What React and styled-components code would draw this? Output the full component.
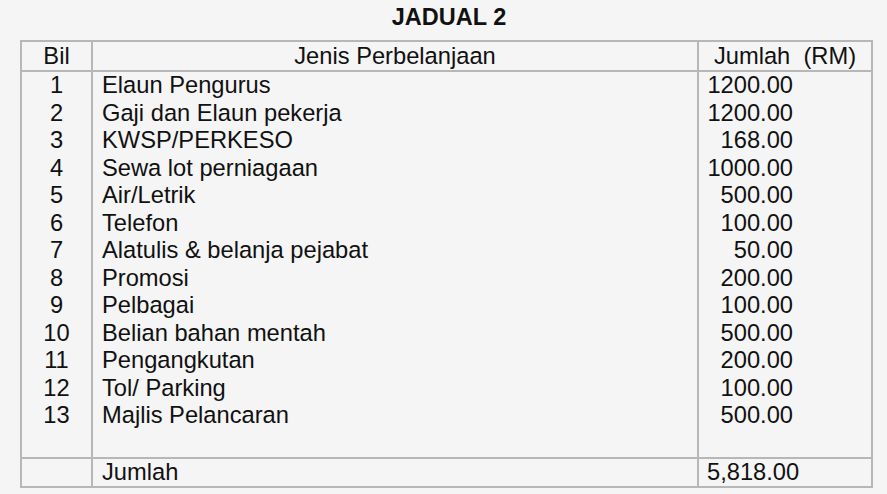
import React from "react";
import styled, { createGlobalStyle } from "styled-components";

const GlobalStyle = createGlobalStyle`
  html, body {
    margin: 0;
    background: #f5f5f5;
  }
  body {
    font-family: "Liberation Sans", Arial, sans-serif;
    color: #111;
  }
`;

const Page = styled.div`
  width: 887px;
  height: 494px;
  padding-top: 3px;
  box-sizing: border-box;
`;

const Title = styled.h1`
  margin: 0 0 9px 0;
  font-size: 23.5px;
  font-weight: bold;
  line-height: 28px;
  text-align: center;
  padding-left: 11px;
`;

const Table = styled.div`
  margin-left: 20px;
  width: 853px;
  display: grid;
  grid-template-columns: 69px 606px 174px;
  border: 2px solid #b7b7b7;
  box-sizing: border-box;
  font-size: 23.7px;
`;

const Cell = styled.div`
  box-sizing: border-box;
  white-space: pre;
  border-left: ${(p) => (p.$first ? "none" : "2px solid #b7b7b7")};
  text-align: ${(p) => p.$align || "left"};
  padding-left: ${(p) => p.$pl || 0}px;
  padding-right: ${(p) => p.$pr || 0}px;
`;

const HeadCell = styled(Cell)`
  height: 30px;
  line-height: 28px;
  border-bottom: 2px solid #b7b7b7;
`;

const BodyCell = styled(Cell)`
  height: 385px;
  line-height: 27.5px;
`;

const FootCell = styled(Cell)`
  height: 29px;
  line-height: 27px;
  border-top: 2px solid #b7b7b7;
`;

const rows = [
  ["1", "Elaun Pengurus", "1200.00"],
  ["2", "Gaji dan Elaun pekerja", "1200.00"],
  ["3", "KWSP/PERKESO", "168.00"],
  ["4", "Sewa lot perniagaan", "1000.00"],
  ["5", "Air/Letrik", "500.00"],
  ["6", "Telefon", "100.00"],
  ["7", "Alatulis & belanja pejabat", "50.00"],
  ["8", "Promosi", "200.00"],
  ["9", "Pelbagai", "100.00"],
  ["10", "Belian bahan mentah", "500.00"],
  ["11", "Pengangkutan", "200.00"],
  ["12", "Tol/ Parking", "100.00"],
  ["13", "Majlis Pelancaran", "500.00"],
];

export default function App() {
  return (
    <Page>
      <GlobalStyle />
      <Title>JADUAL 2</Title>
      <Table>
        <HeadCell $first $align="center">Bil</HeadCell>
        <HeadCell $align="center">Jenis Perbelanjaan</HeadCell>
        <HeadCell $align="center">Jumlah  (RM)</HeadCell>

        <BodyCell $first $align="center">
          {rows.map((r) => (
            <div key={r[0]}>{r[0]}</div>
          ))}
        </BodyCell>
        <BodyCell $pl={9}>
          {rows.map((r) => (
            <div key={r[0]}>{r[1]}</div>
          ))}
        </BodyCell>
        <BodyCell $align="right" $pr={78}>
          {rows.map((r) => (
            <div key={r[0]}>{r[2]}</div>
          ))}
        </BodyCell>

        <FootCell $first />
        <FootCell $pl={9}>Jumlah</FootCell>
        <FootCell $pl={8}>5,818.00</FootCell>
      </Table>
    </Page>
  );
}
